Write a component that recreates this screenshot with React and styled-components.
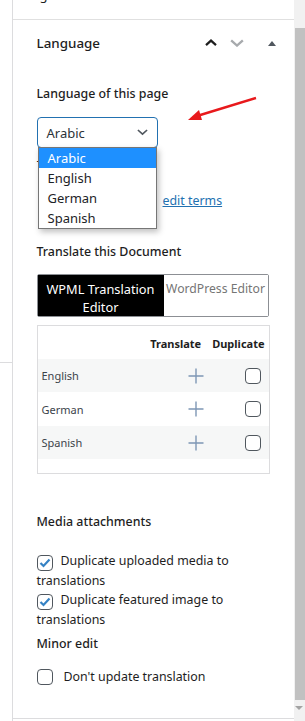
import React from 'react';
import styled, { createGlobalStyle } from 'styled-components';

const GlobalStyle = createGlobalStyle`
  html, body {
    margin: 0;
    padding: 0;
    background: #fff;
  }
  body {
    font-family: "Noto Sans", "Open Sans", sans-serif;
    color: #1e1e1e;
  }
`;

const Page = styled.div`
  width: 305px;
  height: 721px;
  display: flex;
  overflow: hidden;
`;

const Gutter = styled.div`
  width: 12px;
  border-right: 1px solid #dcdcde;
  display: flex;
  flex-direction: column;
`;

const GutterRule = styled.div`
  margin-top: 362px;
  border-top: 1px solid #dcdcde;
`;

const Sidebar = styled.div`
  flex: 1;
  display: flex;
  flex-direction: column;
  border-bottom: 1px solid #dcdcde;
  height: 718px;
  position: relative;
`;

const PrevPanel = styled.div`
  height: 19px;
  border-bottom: 1px solid #e0e0e0;
  overflow: hidden;
  padding-left: 27px;
  font-size: 13px;
  line-height: 18px;
`;

const ClippedText = styled.div`
  margin-top: -14px;
`;

const Header = styled.div`
  height: 46px;
  display: flex;
  align-items: center;
  padding: 0 0 0 24px;
`;

const Title = styled.h2`
  flex: 1;
  margin: 0;
  font-size: 13.4px;
  font-weight: 500;
  color: #1e1e1e;
`;

const IconButton = styled.span`
  display: flex;
  align-items: center;
  justify-content: center;
  width: ${p => p.$w}px;
  color: ${p => p.$color};
`;

const Body = styled.div`
  padding: 19px 24px 0 24px;
  display: flex;
  flex-direction: column;
`;

const Label = styled.div`
  font-size: 12.4px;
  line-height: 18px;
  font-weight: 500;
  color: #1e1e1e;
  margin-top: ${p => p.$mt || 0}px;
`;

const SelectWrap = styled.div`
  position: relative;
  width: 121px;
  margin-top: 14px;
  z-index: 2;
`;

const Select = styled.div`
  height: 29px;
  border: 1px solid #2271b1;
  border-radius: 4px;
  box-sizing: content-box;
  display: flex;
  align-items: center;
  justify-content: space-between;
  padding: 0 9px 0 9px;
  font-size: 13px;
  color: #2c3338;
`;

const SelectArrow = styled.span`
  display: flex;
  color: #50575e;
`;

const OptionList = styled.ul`
  position: absolute;
  top: 30px;
  left: 1px;
  width: 117px;
  margin: 0;
  padding: 0;
  list-style: none;
  background: #fff;
  border: 1px solid #767676;
  box-shadow: 2px 3px 6px rgba(0, 0, 0, 0.25);
`;

const Option = styled.li`
  height: 20px;
  line-height: 20px;
  padding-left: 9px;
  font-size: 13px;
  color: ${p => (p.$active ? '#fff' : '#1d2327')};
  background: ${p => (p.$active ? '#1e90ff' : '#fff')};
`;

const Info = styled.div`
  font-size: 12.4px;
  line-height: 20px;
  color: #1e1e1e;
  margin-top: 3px;
`;

const InfoLine = styled.div`
  white-space: nowrap;
  padding-left: ${p => p.$indent || 0}px;
`;

const Link = styled.a`
  color: #2271b1;
  text-decoration: underline;
`;

const Toggle = styled.div`
  margin-top: 13px;
  width: 230px;
  height: 41px;
  border: 1px solid #8c8f94;
  border-radius: 2px;
  display: flex;
`;

const ToggleOption = styled.div`
  flex: ${p => (p.$active ? '0 0 126px' : '1')};
  background: ${p => (p.$active ? '#000' : '#fff')};
  color: ${p => (p.$active ? '#fff' : '#757575')};
  font-size: ${p => (p.$active ? '12.8px' : '12.2px')};
  line-height: 18px;
  text-align: center;
  padding-top: 5px;
  white-space: ${p => (p.$active ? 'normal' : 'nowrap')};
  overflow: hidden;
`;

const Table = styled.div`
  margin-top: 8px;
  width: 231px;
  height: 147px;
  border: 1px solid #dcdcde;
  display: flex;
  flex-direction: column;
`;

const HeadRow = styled.div`
  height: 33px;
  display: flex;
  align-items: center;
  justify-content: flex-end;
  gap: 11px;
  padding: 2px 4px 0 0;
  box-sizing: border-box;
`;

const HeadCell = styled.div`
  font-size: 11px;
  font-weight: 700;
  color: #1e1e1e;
`;

const Row = styled.div`
  display: grid;
  grid-template-columns: 1fr 48px 32px;
  column-gap: 17px;
  align-items: center;
  height: ${p => p.$h || 33}px;
  background: ${p => (p.$striped ? '#f6f7f7' : '#fff')};
  padding-left: 4px;
`;

const LangCell = styled.div`
  font-size: 11px;
  color: #3c434a;
`;

const Cell = styled.div`
  display: flex;
  justify-content: center;
`;

const Box = styled.span`
  display: inline-flex;
  align-items: center;
  justify-content: center;
  width: 14px;
  height: 14px;
  border: 1px solid #50575e;
  border-radius: 4px;
  background: #fff;
  vertical-align: ${p => p.$valign || 'middle'};
  margin-right: ${p => p.$mr || 0}px;
  flex-shrink: 0;
`;

const CheckText = styled.div`
  font-size: 12.4px;
  line-height: 19px;
  color: #1e1e1e;
  width: 215px;
  margin-top: ${p => p.$mt || 0}px;
`;

const CheckRow = styled.div`
  display: flex;
  align-items: center;
  font-size: 12.4px;
  color: #1e1e1e;
  margin-top: ${p => p.$mt || 0}px;
`;

const Scrollbar = styled.div`
  width: 12px;
  background: #f1f1f1;
  display: flex;
  flex-direction: column;
`;

const Thumb = styled.div`
  margin: 28px 0 0 1px;
  height: 672px;
  background: #c1c1c1;
`;

const ArrowDown = styled.div`
  margin: 6px auto 0 auto;
  width: 0;
  height: 0;
  border-left: 4px solid transparent;
  border-right: 4px solid transparent;
  border-top: 4px solid #a3a3a3;
`;

const Annotation = styled.svg`
  position: absolute;
  left: 160px;
  top: 90px;
  pointer-events: none;
  z-index: 3;
`;

const Chevron = ({ up, size = 12, stroke = 2.2 }) => (
  <svg width={size} height={size * 0.6} viewBox="0 0 12 7" fill="none">
    <polyline
      points={up ? '1,6 6,1.5 11,6' : '1,1 6,5.5 11,1'}
      stroke="currentColor"
      strokeWidth={stroke}
      strokeLinejoin="miter"
    />
  </svg>
);

const Plus = () => (
  <svg width="16" height="16" viewBox="0 0 16 16">
    <path d="M8 0.5 V15.5 M0.5 8 H15.5" stroke="#7e97b5" strokeWidth="1.4" />
  </svg>
);

const Tick = () => (
  <svg width="12" height="10" viewBox="0 0 12 10" fill="none">
    <polyline points="1.5,5 4.5,8 10.5,1.5" stroke="#3582c4" strokeWidth="2.2" />
  </svg>
);

const languages = ['English', 'German', 'Spanish'];

export default function App() {
  return (
    <>
      <GlobalStyle />
      <Page>
        <Gutter>
          <GutterRule />
        </Gutter>
        <Sidebar>
          <PrevPanel>
            <ClippedText>g</ClippedText>
          </PrevPanel>
          <Header>
            <Title>Language</Title>
            <IconButton $w={26} $color="#1e1e1e">
              <Chevron up />
            </IconButton>
            <IconButton $w={26} $color="#a7aaad">
              <Chevron size={14} stroke={2} />
            </IconButton>
            <IconButton $w={44} $color="#50575e">
              <svg width="8" height="5" viewBox="0 0 8 5">
                <polygon points="0,5 4,0 8,5" fill="currentColor" />
              </svg>
            </IconButton>
          </Header>
          <Body>
            <Label>Language of this page</Label>
            <SelectWrap>
              <Select>
                <span>Arabic</span>
                <SelectArrow>
                  <Chevron size={11} stroke={1.8} />
                </SelectArrow>
              </Select>
              <OptionList>
                <Option $active>Arabic</Option>
                <Option>English</Option>
                <Option>German</Option>
                <Option>Spanish</Option>
              </OptionList>
            </SelectWrap>
            <Info>
              <InfoLine>–</InfoLine>
              <InfoLine>&nbsp;</InfoLine>
              <InfoLine $indent={126}>
                <Link href="#">edit terms</Link>
              </InfoLine>
            </Info>
            <Label $mt={32}>Translate this Document</Label>
            <Toggle>
              <ToggleOption $active>WPML Translation Editor</ToggleOption>
              <ToggleOption>WordPress Editor</ToggleOption>
            </Toggle>
            <Table>
              <HeadRow>
                <HeadCell>Translate</HeadCell>
                <HeadCell>Duplicate</HeadCell>
              </HeadRow>
              {languages.map((lang, i) => (
                <Row key={lang} $striped={i % 2 === 0} $h={i === 1 ? 34 : 33}>
                  <LangCell>{lang}</LangCell>
                  <Cell>
                    <Plus />
                  </Cell>
                  <Cell>
                    <Box />
                  </Cell>
                </Row>
              ))}
            </Table>
            <Label $mt={39}>Media attachments</Label>
            <CheckText $mt={20}>
              <Box $mr={8} $valign="-3px">
                <Tick />
              </Box>
              Duplicate uploaded media to translations
            </CheckText>
            <CheckText>
              <Box $mr={8} $valign="-3px">
                <Tick />
              </Box>
              Duplicate featured image to translations
            </CheckText>
            <Label $mt={6}>Minor edit</Label>
            <CheckRow $mt={15}>
              <Box $mr={11} />
              Don't update translation
            </CheckRow>
          </Body>
          <Annotation width="90" height="40" viewBox="0 0 90 40">
            <line x1="83" y1="8" x2="24" y2="26" stroke="#e8191c" strokeWidth="2.4" />
            <polygon points="15,30 26,20 29,30" fill="#e8191c" />
          </Annotation>
        </Sidebar>
        <Scrollbar>
          <Thumb />
          <ArrowDown />
        </Scrollbar>
      </Page>
    </>
  );
}
